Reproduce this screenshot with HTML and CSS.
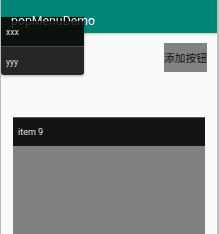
FILE: index.html
```html
<!DOCTYPE html>
<html lang="zh">
<head>
    <meta charset="UTF-8">
    <meta name="viewport" content="width=device-width, initial-scale=1.0">
    <title>popMenuDemo</title>
    <link rel="stylesheet" href="styles.css">
</head>
<body>

<div class="screen">
    <header class="appbar">
        <span class="title">popMenuDemo</span>
    </header>

    <div class="content">
        <div class="action-row">
            <button class="add-btn">添加按钮</button>
        </div>

        <div class="list">
            <div class="list-item">item 9</div>
            <div class="list-rest"></div>
        </div>
    </div>

    <div class="popup-menu">
        <div class="popup-item selected">xxx</div>
        <div class="popup-item">yyy</div>
    </div>
</div>

</body>
</html>
```

FILE: styles.css
```css
html, body {
    margin: 0;
    padding: 0;
}
body {
    font-family: Roboto, "Noto Sans CJK SC", sans-serif;
    background: #fafafa;
    width: 219px;
    height: 234px;
    overflow: hidden;
}
.screen {
    position: relative;
    height: 234px;
    border-left: 1px solid #bdbdbd;
    border-right: 2px solid #bdbdbd;
    background: #fafafa;
    display: flex;
    flex-direction: column;
    overflow: hidden;
}
.appbar {
    height: 33px;
    flex: none;
    box-sizing: border-box;
    background: #008577;
    padding: 10px 0 0 10px;
    box-shadow: 0 1px 2px rgba(0, 0, 0, 0.25);
}
/* title shows faintly through the open menu */
.title {
    position: relative;
    z-index: 2;
    display: inline-block;
    font-size: 12.3px;
    line-height: 14px;
    font-weight: 400;
    color: transparent;
    background:
        linear-gradient(to right, transparent 0 73px, #fff 73px),
        linear-gradient(to bottom, #fff 0 7px, #353535 7px);
    -webkit-background-clip: text;
    background-clip: text;
}
.content {
    flex: 1;
    display: flex;
    flex-direction: column;
}
.action-row {
    display: flex;
    justify-content: flex-end;
    padding: 10px 10px 0 0;
}
.add-btn {
    height: 29px;
    padding: 0;
    margin: 0;
    border: none;
    background: #828282;
    color: #111;
    font-family: "Noto Sans CJK SC", sans-serif;
    font-size: 10.7px;
    line-height: 29px;
    white-space: nowrap;
    width: 43px;
    overflow: visible;
    display: flex;
    justify-content: center;
}
.list {
    flex: 1;
    margin: 45px 12px 0 12px;
    display: flex;
    flex-direction: column;
}
.list-item {
    height: 28px;
    flex: none;
    background: #141414;
    border-top: 1px solid #5a5a5a;
    color: #e0e0e0;
    font-size: 9px;
    display: flex;
    align-items: center;
    padding-left: 5px;
}
.list-rest {
    flex: 1;
    background: #808080;
}
.popup-menu {
    position: absolute;
    left: 0;
    top: 17px;
    width: 83px;
    height: 58px;
    background: #262626;
    border-radius: 0 0 3px 3px;
    box-shadow: 0 1px 3px rgba(0, 0, 0, 0.3);
    overflow: hidden;
    display: flex;
    flex-direction: column;
}
.popup-item {
    flex: 1;
    display: flex;
    align-items: center;
    padding: 2px 0 0 5px;
    color: #dcdcdc;
    font-size: 8.5px;
}
.popup-item.selected {
    background: #0b110f;
    border-bottom: 1px solid #4a4a4a;
}
```
